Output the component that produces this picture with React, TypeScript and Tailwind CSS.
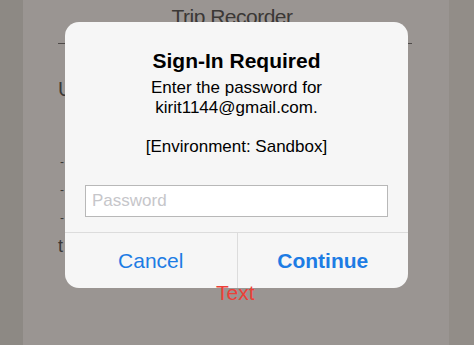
import React from "react";

const sans = { fontFamily: '"Liberation Sans", Arial, sans-serif' };

export default function App() {
  return (
    <div className="flex w-[474px] h-[345px] overflow-hidden bg-[#8d8984]" style={sans}>
      {/* left band */}
      <div className="w-[23px] shrink-0" />

      {/* app screen behind the alert */}
      <div className="relative w-[426px] h-full bg-[#9a9592] text-[#3b3836]">
        <div className="pt-[5px] text-center text-[21px] leading-[24px] tracking-[-0.5px] [font-family:'Liberation_Sans_Narrow','Liberation_Sans',sans-serif] pr-[8px]">
          Trip Recorder
        </div>
        <div className="mt-[14px] ml-[35px] mr-[37px] h-px bg-[#4e4a48]" />
        <div className="mt-[35px] ml-[35px] text-[20px] leading-[20px]">U</div>
        <div className="mt-[60px] ml-[37px] flex flex-col gap-[21px] text-[12px] leading-[7px]">
          <span>-</span>
          <span>-</span>
          <span>-</span>
        </div>
        <div className="mt-[15px] ml-[35px] text-[18px] leading-[18px]">t</div>

        {/* alert */}
        <div className="absolute left-[42px] top-[22px] w-[343px] h-[266px] rounded-[14px] bg-[#f6f6f6] flex flex-col overflow-hidden text-black">
          <div className="pt-[26px] text-center text-[21px] leading-[26px] font-bold">
            Sign-In Required
          </div>
          <div className="mt-[4px] text-center text-[17px] leading-[19.5px]">
            <div>Enter the password for</div>
            <div>kirit1144@gmail.com.</div>
            <div>&nbsp;</div>
            <div>[Environment: Sandbox]</div>
          </div>
          <div className="mt-[29px] mx-[20px]">
            <input
              type="password"
              placeholder="Password"
              className="w-full h-[32px] border border-[#b8b8b8] bg-white px-[6px] text-[17px] outline-none placeholder:text-[#c6c6ca]"
              style={sans}
            />
          </div>
          <div className="mt-[15px] grid flex-1 grid-cols-2 border-t border-[#dcdcdc]">
            <div className="flex items-center justify-center text-[21px] text-[#1d7ce4]">
              Cancel
            </div>
            <div className="flex items-center justify-center border-l border-[#dcdcdc] text-[21px] font-bold text-[#1d7ce4]">
              Continue
            </div>
          </div>
        </div>

        <div className="absolute left-[193px] top-[282px] text-[21px] leading-[21px] text-[#ec4038]">
          Text
        </div>
      </div>

      {/* right band */}
      <div className="flex-1 bg-[#928d88]" />
    </div>
  );
}
